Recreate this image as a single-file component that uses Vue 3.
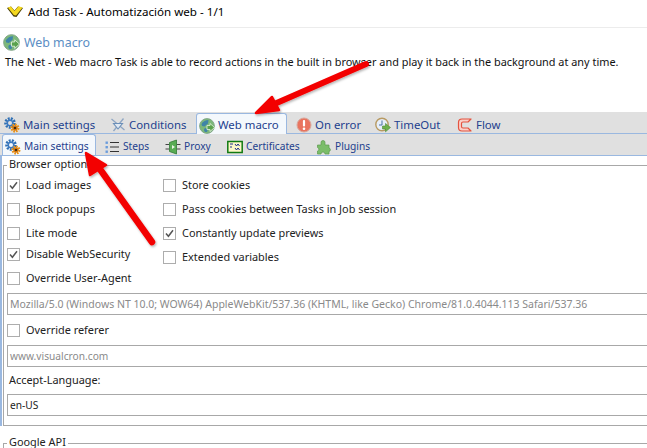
<script setup>
const mainTabs = [
  { label: 'Main settings', icon: 'gear', w: 106 },
  { label: 'Conditions', icon: 'cond', w: 89 },
  { label: 'Web macro', icon: 'globe', w: 91, mr: 6, active: true },
  { label: 'On error', icon: 'err', w: 79 },
  { label: 'TimeOut', icon: 'clock', w: 82 },
  { label: 'Flow', icon: 'flow', w: 50 }
]
const subTabs = [
  { label: 'Main settings', icon: 'gear', w: 94, mr: 5, active: true },
  { label: 'Steps', icon: 'steps', w: 61 },
  { label: 'Proxy', icon: 'proxy', w: 62 },
  { label: 'Certificates', icon: 'cert', w: 89 },
  { label: 'Plugins', icon: 'plugin', w: 70 }
]
const leftChecks = [
  { label: 'Load images', on: true },
  { label: 'Block popups' },
  { label: 'Lite mode' },
  { label: 'Disable WebSecurity', on: true, tight: true },
  { label: 'Override User-Agent' }
]
const rightChecks = [
  { label: 'Store cookies' },
  { label: 'Pass cookies between Tasks in Job session' },
  { label: 'Constantly update previews', on: true },
  { label: 'Extended variables' }
]
</script>

<template>
  <div class="window">
    <div class="titlebar">
      <svg class="logo" width="16" height="11" viewBox="0 0 16 11">
        <path d="M0 2 L4 0.5 L7.5 4.5 L11 0.5 L16 2 L9.5 11 L6.5 10.5 Z" fill="#4a3f08" />
        <path d="M0.8 1.6 L4 0.6 L7.5 5 L11.5 0.2 L15.6 1.4 L9 9.6 L6.8 9 Z" fill="#f4d81e" />
      </svg>
      <span>Add Task - Automatización web - 1/1</span>
    </div>
    <div class="intro">
      <div class="intro-title">
        <svg width="17" height="17" viewBox="0 0 16 16"><use href="#i-globe" /></svg>
        <span>Web macro</span>
      </div>
      <p>The Net - Web macro Task is able to record actions in the built in browser and play it back in the background at any time.</p>
    </div>

    <svg class="defs" width="0" height="0">
      <defs>
        <g id="i-globe">
          <circle cx="8" cy="8" r="7.4" fill="#7cb87a" stroke="#7fa487" stroke-width="0.9" />
          <path d="M2.5 6 Q5 2 9.5 2 L9 5.5 L5.5 8.5 L3 8 Z" fill="#3f84a8" />
          <path d="M6 10 Q4 12 6 14 L8 14 L9 11 Z" fill="#3f84a8" />
          <path d="M8 7.5 H11 V5.5 L15.5 9.5 L11 13.5 V11.5 H8 Z" fill="#5aa24e" stroke="#e5f2e0" stroke-width="0.8" />
        </g>
        <g id="i-gear">
          <circle cx="6" cy="6" r="4.4" fill="none" stroke="#2f6fb4" stroke-width="2.8" stroke-dasharray="1.9 1.1" />
          <circle cx="6" cy="6" r="2.8" fill="none" stroke="#3c7ac0" stroke-width="1.6" />
          <circle cx="11" cy="11" r="3.4" fill="none" stroke="#e8941c" stroke-width="2.2" stroke-dasharray="1.7 0.9" />
          <circle cx="11" cy="11" r="2" fill="#3d2a10" stroke="#dd7d10" stroke-width="1.3" />
        </g>
        <g id="i-cond">
          <path d="M1.5 2 L14.5 13 M3.5 14 L13.5 1.5" stroke="#8ea6c4" stroke-width="1.3" fill="none" />
          <path d="M3.5 6.5 H12.5 L8 12 Z" fill="#dfe8f2" stroke="#6b8fb8" stroke-width="1.1" />
        </g>
        <g id="i-err">
          <circle cx="8" cy="8" r="7" fill="#e9745f" stroke="#d9a79c" />
          <rect x="6.9" y="3" width="2.2" height="6.5" rx="1" fill="#fff" />
          <circle cx="8" cy="11.8" r="1.3" fill="#fff" />
        </g>
        <g id="i-clock">
          <circle cx="7" cy="7.5" r="6.2" fill="#e6eef9" stroke="#b89a62" stroke-width="1.4" />
          <path d="M7 3.5 V8 H4" stroke="#4a72a8" fill="none" />
          <path d="M7.5 9 H10.5 V6.5 L15.5 10.5 L10.5 14.8 V12 H7.5 Z" fill="#6eb04c" stroke="#4f8a36" stroke-width="0.6" />
        </g>
        <g id="i-flow">
          <path d="M14 2 H5 Q1.5 2 1.5 5.5 V10.5 Q1.5 14 5 14 H14 L11 11 H6 Q4.5 11 4.5 9.5 V6.5 Q4.5 5 6 5 H11 Z" fill="#fbcfc8" stroke="#e4533f" stroke-width="1.2" stroke-linejoin="round" />
        </g>
        <g id="i-steps">
          <path d="M6 3.5 H15 M6 8 H15 M6 12.5 H15" stroke="#333" stroke-width="1.1" />
          <rect x="1.5" y="2.5" width="2.4" height="2.4" fill="#6a9cdc" />
          <rect x="1.5" y="7" width="2.4" height="2.4" fill="#6a9cdc" />
          <rect x="1.5" y="11.5" width="2.4" height="2.4" fill="#6a9cdc" />
        </g>
        <g id="i-proxy">
          <path d="M4.5 3.5 L11.5 1 V15 L4.5 12.5 Z" fill="#58ac54" stroke="#2e7a34" stroke-width="0.8" />
          <path d="M7 6 L10 8 L7 10 Z" fill="#eaf6e6" />
          <path d="M0.5 5.5 H4 M0.5 10 H4 M12 5.5 H15.5 M12 10 H15.5" stroke="#444" stroke-width="1" />
        </g>
        <g id="i-cert">
          <rect x="0.8" y="2.5" width="14.4" height="11" fill="#fdf8c8" stroke="#127a12" stroke-width="1.5" />
          <path d="M3 5 H6 M3 8 H5 M8 5 L9.5 7 L11 5 L12.5 7 M8 9 L9.5 11 L11 9 L12.5 11" stroke="#1c2e8a" stroke-width="1" fill="none" />
        </g>
        <g id="i-plugin">
          <path d="M1.5 6 H5 V3.5 A2 2 0 0 1 9 3.5 V6 H13 V9 A1.8 1.8 0 0 1 13 12.5 V15 H9 A2 2 0 0 0 5 15 H1.5 V12 A1.8 1.8 0 0 0 1.5 8.5 Z" fill="#7bbd6a" stroke="#5c9b4e" stroke-width="0.7" />
        </g>
      </defs>
    </svg>

    <div class="main-tabs">
      <div v-for="t in mainTabs" :key="t.label" class="tab" :class="{ active: t.active }" :style="{ width: t.w + 'px', marginRight: (t.mr || 0) + 'px' }">
        <svg width="16" height="16" viewBox="0 0 16 16"><use :href="'#i-' + t.icon" /></svg>
        <span class="tab-label">{{ t.label }}</span>
      </div>
    </div>
    <div class="sub-tabs">
      <div v-for="t in subTabs" :key="t.label" class="subtab" :class="{ active: t.active }" :style="{ width: t.w + 'px', marginRight: (t.mr || 0) + 'px' }">
        <svg width="16" height="16" viewBox="0 0 16 16"><use :href="'#i-' + t.icon" /></svg>
        <span class="tab-label">{{ t.label }}</span>
      </div>
    </div>

    <div class="panel">
      <fieldset class="group">
        <legend>Browser options</legend>
        <div class="check-columns">
          <div class="col-left">
            <label v-for="c in leftChecks" :key="c.label" class="check" :class="{ tight: c.tight }">
              <span class="box"><svg v-if="c.on" width="9" height="9" viewBox="0 0 9 9"><path d="M1 4.5 L3.4 7.2 L8 1.2" fill="none" stroke="#555" stroke-width="1.5" /></svg></span>
              <span class="check-label">{{ c.label }}</span>
            </label>
          </div>
          <div class="col-right">
            <label v-for="c in rightChecks" :key="c.label" class="check">
              <span class="box"><svg v-if="c.on" width="9" height="9" viewBox="0 0 9 9"><path d="M1 4.5 L3.4 7.2 L8 1.2" fill="none" stroke="#555" stroke-width="1.5" /></svg></span>
              <span class="check-label">{{ c.label }}</span>
            </label>
          </div>
        </div>
        <div class="input muted ua">Mozilla/5.0 (Windows NT 10.0; WOW64) AppleWebKit/537.36 (KHTML, like Gecko) Chrome/81.0.4044.113 Safari/537.36</div>
        <label class="check referer">
          <span class="box"></span>
          <span class="check-label">Override referer</span>
        </label>
        <div class="input muted small">www.visualcron.com</div>
        <div class="field-label">Accept-Language:</div>
        <div class="input small">en-US</div>
      </fieldset>
    </div>
    <fieldset class="group second">
      <legend>Google API</legend>
    </fieldset>

    <svg class="arrows" width="647" height="448" viewBox="0 0 647 448">
      <defs>
        <filter id="sh" x="-20%" y="-20%" width="140%" height="140%"><feDropShadow dx="1" dy="1.5" stdDeviation="1.2" flood-color="#000" flood-opacity="0.3" /></filter>
      </defs>
      <g filter="url(#sh)" fill="#f30000" stroke="#f30000" stroke-linejoin="round" stroke-linecap="round">
        <path d="M366 64 L272 105" stroke-width="6" fill="none" />
        <path d="M256 113 L272 97 L279 110 Z" stroke-width="2.5" />
        <path d="M152 242 L97 165" stroke-width="6.5" fill="none" />
        <path d="M86 153 L106 165 L90 175 Z" stroke-width="2.5" />
      </g>
    </svg>
  </div>
</template>

<style scoped>
.window { position: relative; width: 647px; height: 448px; overflow: hidden; background: #fff; font-family: "Noto Sans", sans-serif; font-size: 10.9px; color: #222; }
.titlebar { height: 28px; box-sizing: border-box; border-bottom: 1px solid #ececec; display: flex; align-items: center; gap: 5px; padding: 0 0 4px 7px; font-size: 11.6px; color: #000; }
.logo { flex: none; }
.intro { height: 84px; box-sizing: border-box; padding: 6px 0 0 3px; }
.intro-title { display: flex; align-items: center; gap: 4px; font-size: 12.4px; color: #5b8ec4; height: 17px; }
.intro p { margin: 3px 0 0 2px; white-space: nowrap; color: #111; }
.defs { position: absolute; }
.main-tabs { display: flex; height: 22px; background: #e0e0e0; border-bottom: 1px solid #9ab8e0; padding-left: 1px; box-sizing: border-box; }
.tab { display: flex; align-items: center; gap: 3px; padding: 5px 0 0 3px; box-sizing: border-box; color: #23408e; font-size: 11.4px; white-space: nowrap; flex: none; }
.tab.active { background: #f4f8fc; border: 1px solid #9ab8e0; border-bottom: 0; border-radius: 3px 3px 0 0; height: 21px; margin-top: 1px; padding: 3px 0 0 2px; }
.sub-tabs { display: flex; height: 22px; background: #e0e0e0; border-bottom: 1px solid #9ab8e0; padding-left: 2px; box-sizing: border-box; }
.subtab { display: flex; align-items: center; gap: 3px; padding: 4px 0 0 3px; box-sizing: border-box; color: #23408e; font-size: 10.2px; white-space: nowrap; flex: none; }
.subtab.active { background: #f4f8fc; border: 1px solid #9ab8e0; border-bottom: 0; border-radius: 3px 3px 0 0; height: 21px; padding: 3px 0 0 2px; }
.tab-label { margin-top: -2px; }
.panel { border-left: 2px solid #9ab8e0; padding: 2px 0 0 1px; height: 270px; box-sizing: border-box; }
.group { border: 1px solid #a8a8a8; margin: 0; padding: 0 0 0 3px; box-sizing: border-box; width: 660px; height: 268px; min-width: 0; }
.group legend { padding: 0 2px 2px; margin: 0; line-height: 12px; color: #222; }
.second { height: 30px; margin: 10px 0 0 3px; }
.check-columns { display: flex; padding-top: 6px; }
.col-left { width: 156px; display: flex; flex-direction: column; gap: 10px; flex: none; }
.col-right { display: flex; flex-direction: column; gap: 10px; }
.check { display: flex; align-items: center; gap: 6px; height: 14px; white-space: nowrap; color: #222; }
.check.tight { margin-top: -3px; }
.check-label { margin-top: -2px; }
.box { flex: none; width: 13px; height: 13px; box-sizing: border-box; border: 1px solid #adadad; display: flex; align-items: center; justify-content: center; background: #fff; }
.input { height: 22px; box-sizing: border-box; border: 1px solid #a8a8a8; padding-left: 2px; display: flex; align-items: center; white-space: nowrap; overflow: hidden; color: #222; font-size: 10.5px; }
.input.small { font-size: 10.2px; }
.input.muted { color: #8a8a8a; }
.ua { margin-top: 8px; }
.referer { margin: 8px 0; }
.field-label { margin: 6px 0 7px 2px; line-height: 14px; }
.arrows { position: absolute; left: 0; top: 0; pointer-events: none; }
</style>
